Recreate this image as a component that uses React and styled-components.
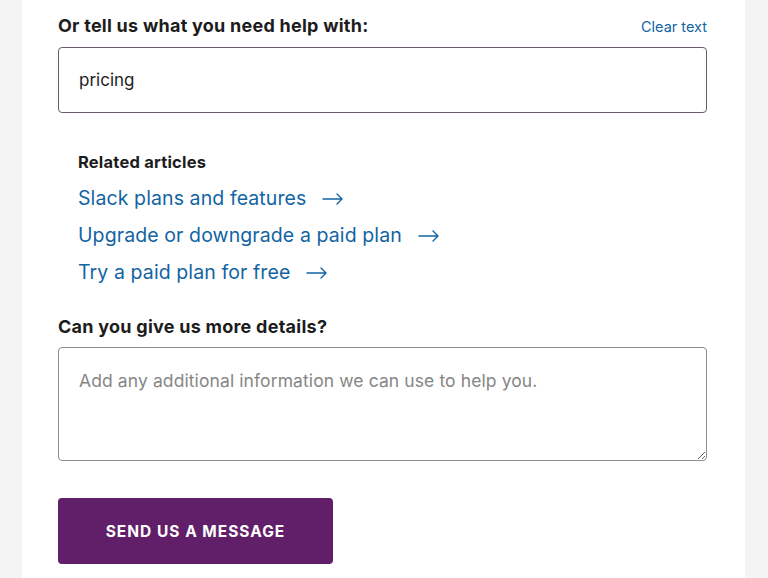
import styled, { createGlobalStyle } from 'styled-components';

const GlobalStyle = createGlobalStyle`
  html, body {
    margin: 0;
    padding: 0;
    background: #f4f4f4;
    font-family: Inter, "Liberation Sans", sans-serif;
    color: #1d1c1d;
  }
  * { box-sizing: border-box; }
`;

const Page = styled.div`
  height: 578px;
  overflow: hidden;
  padding: 0 23px 0 22px;
`;

const Card = styled.div`
  background: #ffffff;
  height: 100%;
  padding: 15px 38px 0 36px;
`;

const LabelRow = styled.div`
  display: flex;
  justify-content: space-between;
  align-items: baseline;
  margin-bottom: 11px;
`;

const Label = styled.label`
  font-size: 18px;
  font-weight: 700;
  letter-spacing: 0.25px;
  color: #1d1c1d;
`;

const ClearLink = styled.a`
  font-size: 14.5px;
  color: #1264a3;
  text-decoration: none;
`;

const TextInput = styled.input`
  width: 100%;
  height: 66px;
  border: 1.5px solid #6a5b6c;
  border-radius: 4px;
  padding: 0 20px;
  font-family: inherit;
  font-size: 17px;
  color: #1d1c1d;
  outline: none;
`;

const Related = styled.div`
  padding: 39px 0 0 20px;
`;

const RelatedTitle = styled.div`
  font-size: 16.5px;
  font-weight: 700;
  letter-spacing: 0.2px;
  margin-bottom: 8px;
`;

const ArticleLink = styled.a`
  display: flex;
  align-items: center;
  gap: 16px;
  font-size: 19.5px;
  letter-spacing: 0.1px;
  line-height: 37px;
  color: #1264a3;
  text-decoration: none;
`;

const Arrow = () => (
  <svg width="22" height="12" viewBox="0 0 22 12" fill="none" stroke="#1264a3" strokeWidth="1.4" strokeLinecap="round" strokeLinejoin="round">
    <path d="M1 6h19M15 1l5 5-5 5" />
  </svg>
);

const DetailsBlock = styled.div`
  margin-top: 25px;
`;

const TextArea = styled.textarea`
  display: block;
  width: 100%;
  height: 114px;
  margin-top: 10px;
  border: 1.5px solid #8d8d8d;
  border-radius: 4px;
  padding: 22px 20px;
  font-family: inherit;
  font-size: 17.5px;
  letter-spacing: 0.1px;
  color: #1d1c1d;
  outline: none;
  &::placeholder {
    color: #868686;
  }
`;

const SendButton = styled.button`
  margin-top: 37px;
  width: 275px;
  height: 66px;
  background: #611f69;
  color: #ffffff;
  border: none;
  border-radius: 4px;
  font-family: inherit;
  font-size: 15.5px;
  font-weight: 700;
  letter-spacing: 1px;
  cursor: pointer;
`;

const articles = [
  'Slack plans and features',
  'Upgrade or downgrade a paid plan',
  'Try a paid plan for free',
];

const App = () => {
  return (
    <Page>
      <GlobalStyle />
      <Card>
        <LabelRow>
          <Label>Or tell us what you need help with:</Label>
          <ClearLink href="#">Clear text</ClearLink>
        </LabelRow>
        <TextInput defaultValue="pricing" />
        <Related>
          <RelatedTitle>Related articles</RelatedTitle>
          {articles.map((a) => (
            <ArticleLink href="#" key={a}>
              {a}
              <Arrow />
            </ArticleLink>
          ))}
        </Related>
        <DetailsBlock>
          <Label>Can you give us more details?</Label>
          <TextArea placeholder="Add any additional information we can use to help you." />
        </DetailsBlock>
        <SendButton>SEND US A MESSAGE</SendButton>
      </Card>
    </Page>
  );
};

export default App;
